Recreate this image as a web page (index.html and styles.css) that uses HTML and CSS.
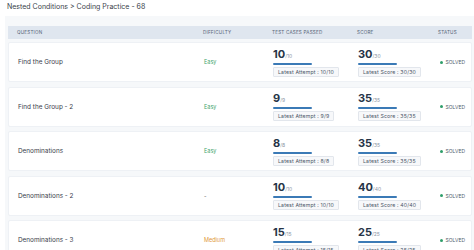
FILE: index.html
```html
<!DOCTYPE html>
<html>
<head>
<meta charset="utf-8">
<link rel="stylesheet" href="styles.css">
</head>
<body>
<div class="crumb">Nested Conditions &gt; Coding Practice - 68</div>
<div class="panel">
  <div class="head grid">
    <div>QUESTION</div>
    <div>DIFFICULTY</div>
    <div>TEST CASES PASSED</div>
    <div>SCORE</div>
    <div>STATUS</div>
  </div>
  <div class="rows">
    <div class="row grid">
      <div class="q">Find the Group</div>
      <div class="diff easy">Easy</div>
      <div class="metric"><div class="num">10<span>/10</span></div><div class="bar"></div><div class="tag">Latest Attempt : 10/10</div></div>
      <div class="metric"><div class="num">30<span>/30</span></div><div class="bar"></div><div class="tag">Latest Score : 30/30</div></div>
      <div class="status"><i></i>SOLVED</div>
    </div>
    <div class="row grid">
      <div class="q">Find the Group - 2</div>
      <div class="diff easy">Easy</div>
      <div class="metric"><div class="num">9<span>/9</span></div><div class="bar"></div><div class="tag">Latest Attempt : 9/9</div></div>
      <div class="metric"><div class="num">35<span>/35</span></div><div class="bar"></div><div class="tag">Latest Score : 35/35</div></div>
      <div class="status"><i></i>SOLVED</div>
    </div>
    <div class="row grid">
      <div class="q">Denominations</div>
      <div class="diff easy">Easy</div>
      <div class="metric"><div class="num">8<span>/8</span></div><div class="bar"></div><div class="tag">Latest Attempt : 8/8</div></div>
      <div class="metric"><div class="num">35<span>/35</span></div><div class="bar"></div><div class="tag">Latest Score : 35/35</div></div>
      <div class="status"><i></i>SOLVED</div>
    </div>
    <div class="row grid">
      <div class="q">Denominations - 2</div>
      <div class="diff none">-</div>
      <div class="metric"><div class="num">10<span>/10</span></div><div class="bar"></div><div class="tag">Latest Attempt : 10/10</div></div>
      <div class="metric"><div class="num">40<span>/40</span></div><div class="bar"></div><div class="tag">Latest Score : 40/40</div></div>
      <div class="status"><i></i>SOLVED</div>
    </div>
    <div class="row grid">
      <div class="q">Denominations - 3</div>
      <div class="diff medium">Medium</div>
      <div class="metric"><div class="num">15<span>/15</span></div><div class="bar"></div><div class="tag">Latest Attempt : 15/15</div></div>
      <div class="metric"><div class="num">25<span>/25</span></div><div class="bar"></div><div class="tag">Latest Score : 25/25</div></div>
      <div class="status"><i></i>SOLVED</div>
    </div>
  </div>
</div>
</body>
</html>
```
FILE: styles.css
```css
* { box-sizing: border-box; }
html, body { margin: 0; padding: 0; background: #ffffff; }
body {
  font-family: Inter, "Noto Sans", "Liberation Sans", sans-serif;
  color: #3b4351;
  width: 474px;
  height: 250px;
  overflow: hidden;
}
.crumb {
  font-size: 7px;
  line-height: 10px;
  padding: 2px 0 0 7px;
  height: 16px;
  color: #3a3f4a;
}
.panel {
  margin-left: 5px;
  width: 469px;
  background: #f6f8fa;
  padding: 10px 2px 0 3px;
  height: 240px;
}
.grid {
  display: grid;
  grid-template-columns: 186px 69px 85px 81px 1fr;
  padding-left: 9px;
  align-items: center;
}
.head {
  height: 13px;
  background: #dfe6ef;
  font-size: 4.6px;
  letter-spacing: 0.2px;
  color: #566477;
}
.rows {
  display: flex;
  flex-direction: column;
  gap: 4.5px;
  padding-top: 3px;
}
.row {
  height: 40px;
  background: #ffffff;
  border: 1px solid #eef1f5;
  border-radius: 2px;
}
.q {
  font-size: 6.4px;
  color: #3a404c;
}
.diff { font-size: 5.5px; }
.easy { color: #3fa56b; }
.medium { color: #e19a3c; }
.none { color: #555; }
.metric {
  display: flex;
  flex-direction: column;
  align-items: flex-start;
}
.num {
  font-size: 11px;
  font-weight: 700;
  line-height: 12px;
  color: #263447;
}
.num span {
  font-size: 5px;
  font-weight: 400;
  color: #8a94a3;
}
.bar {
  width: 39px;
  height: 2px;
  background: #3b7ab6;
  border-radius: 1px;
  margin-top: 1px;
}
.tag {
  margin-top: 2px;
  font-size: 5.2px;
  letter-spacing: 0.15px;
  line-height: 8px;
  padding: 0 4px;
  border: 1px solid #e2e6ec;
  background: #f7f8fa;
  border-radius: 1px;
  color: #4a5566;
}
.status {
  font-size: 5px;
  color: #4c5868;
  display: flex;
  align-items: center;
  gap: 2.5px;
  padding-left: 1px;
}
.status i {
  width: 3px;
  height: 3px;
  border-radius: 50%;
  background: #2f9e6a;
}
```
